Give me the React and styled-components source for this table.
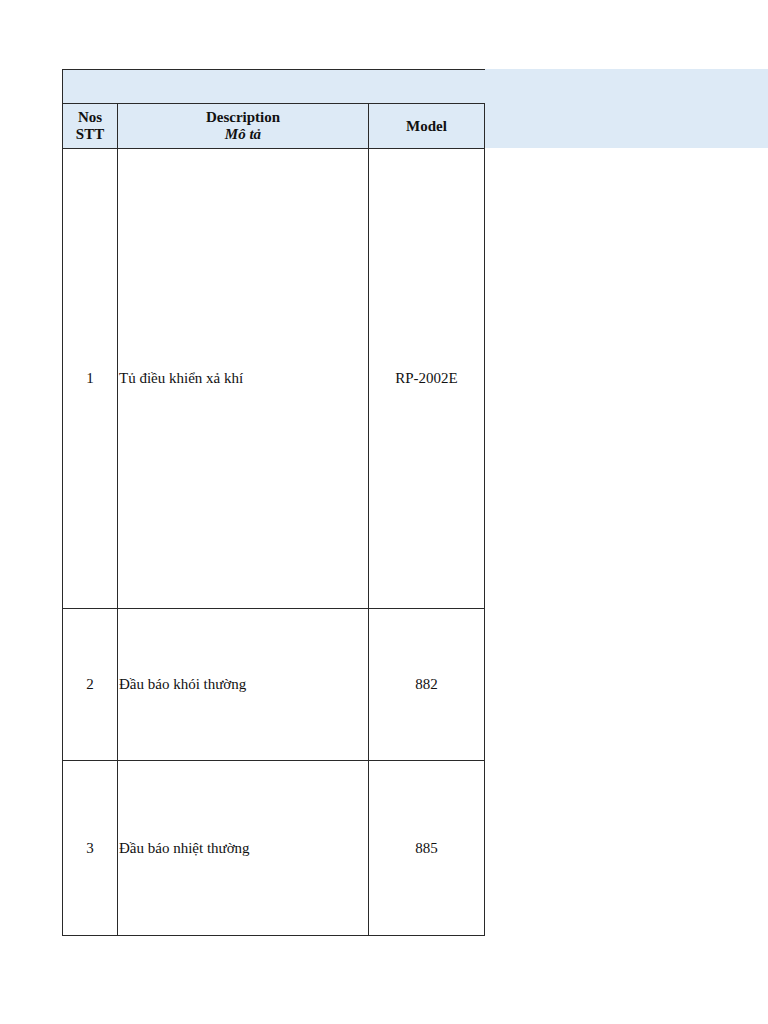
import React from 'react'
import styled, { createGlobalStyle } from 'styled-components'

const BLUE = '#ddeaf6'
const LINE = '#2a2a2a'

const GlobalStyle = createGlobalStyle`
  html, body {
    margin: 0;
    padding: 0;
    background: #ffffff;
  }
  body {
    font-family: "Liberation Serif", "Times New Roman", serif;
    color: #111;
  }
`

const Page = styled.div`
  padding: 69px 0 0 62px;
  display: flex;
  align-items: flex-start;
`

const Sheet = styled.table`
  border-collapse: collapse;
  table-layout: fixed;
  width: 422px;
  font-size: 15px;
  line-height: 17px;
`

const Filler = styled.div`
  flex: 1;
  height: 79px;
  background: ${BLUE};
`

const TitleCell = styled.td`
  height: 33px;
  background: ${BLUE};
  border-top: 1px solid ${LINE};
  border-left: 1px solid ${LINE};
  padding: 0;
`

const HeadCell = styled.th`
  height: 44px;
  background: ${BLUE};
  border: 1px solid ${LINE};
  font-weight: 700;
  text-align: center;
  vertical-align: middle;
  padding: 0;
`

const Cell = styled.td`
  height: ${(p) => p.$h}px;
  border: 1px solid ${LINE};
  text-align: ${(p) => (p.$left ? 'left' : 'center')};
  vertical-align: middle;
  padding: ${(p) => (p.$left ? '0 0 0 1px' : '0')};
`

const Sub = styled.i`
  display: block;
  font-weight: 700;
`

const rows = [
  { no: '1', desc: 'Tủ điều khiển xả khí', model: 'RP-2002E', h: 459 },
  { no: '2', desc: 'Đầu báo khói thường', model: '882', h: 151 },
  { no: '3', desc: 'Đầu báo nhiệt thường', model: '885', h: 174 },
]

export default function App() {
  return (
    <>
      <GlobalStyle />
      <Page>
        <Sheet>
          <colgroup>
            <col style={{ width: 55 }} />
            <col style={{ width: 251 }} />
            <col style={{ width: 116 }} />
          </colgroup>
          <thead>
            <tr>
              <TitleCell colSpan={3} />
            </tr>
            <tr>
              <HeadCell>Nos<br />STT</HeadCell>
              <HeadCell>Description<Sub>Mô tả</Sub></HeadCell>
              <HeadCell>Model</HeadCell>
            </tr>
          </thead>
          <tbody>
            {rows.map((r) => (
              <tr key={r.no}>
                <Cell $h={r.h}>{r.no}</Cell>
                <Cell $h={r.h} $left>{r.desc}</Cell>
                <Cell $h={r.h}>{r.model}</Cell>
              </tr>
            ))}
          </tbody>
        </Sheet>
        <Filler />
      </Page>
    </>
  )
}
